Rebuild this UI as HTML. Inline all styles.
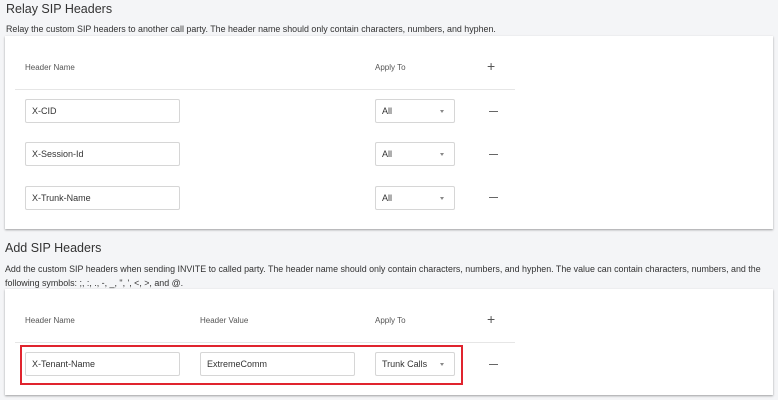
<!DOCTYPE html>
<html><head><style>
*{box-sizing:border-box;margin:0;padding:0}
body{width:778px;height:400px;background:#f4f5f7;font-family:"Liberation Sans",sans-serif;color:#333;position:relative;overflow:hidden}
.a{position:absolute}
.t{font-size:12.5px;color:#333}
.d{font-size:8.9px;color:#333;line-height:14px}
.card{background:#fff;box-shadow:0 1px 2px rgba(0,0,0,.35)}
.lbl{font-size:8px;color:#555}
.in{border:1px solid #d6d6d6;border-radius:2px;height:24px;font-size:9px;color:#333;padding:0 6px;line-height:22px;background:#fff}
.car{position:absolute;right:10px;top:10px;border-left:2.5px solid transparent;border-right:2.5px solid transparent;border-top:3px solid #888}
.minus{width:9px;height:1px;background:#666}
.line{height:1px;background:#e6e6e6}
</style></head><body>
<div class="a t" style="left:6px;top:2px">Relay SIP Headers</div>
<div class="a d" style="left:6px;top:22px">Relay the custom SIP headers to another call party. The header name should only contain characters, numbers, and hyphen.</div>
<div class="a card" style="left:5px;top:36px;width:768px;height:193px"></div>
<div class="a lbl" style="left:25px;top:63px">Header Name</div>
<div class="a lbl" style="left:375px;top:63px">Apply To</div>
<div class="a" style="left:487px;top:58px;font-size:14px;color:#555">+</div>
<div class="a line" style="left:15px;top:89px;width:500px"></div>

<div class="a in" style="left:25px;top:99px;width:155px">X-CID</div>
<div class="a in" style="left:375px;top:99px;width:80px">All<span class="car"></span></div>
<div class="a minus" style="left:489px;top:111px"></div>
<div class="a in" style="left:25px;top:142px;width:155px">X-Session-Id</div>
<div class="a in" style="left:375px;top:142px;width:80px">All<span class="car"></span></div>
<div class="a minus" style="left:489px;top:154px"></div>
<div class="a in" style="left:25px;top:186px;width:155px">X-Trunk-Name</div>
<div class="a in" style="left:375px;top:186px;width:80px">All<span class="car"></span></div>
<div class="a minus" style="left:489px;top:197px"></div>

<div class="a t" style="left:5px;top:241px">Add SIP Headers</div>
<div class="a d" style="left:5px;top:262px;width:768px">Add the custom SIP headers when sending INVITE to called party. The header name should only contain characters, numbers, and hyphen. The value can contain characters, numbers, and the following symbols: ;, :, ., -, _, ", ', &lt;, &gt;, and @.</div>
<div class="a card" style="left:5px;top:289px;width:768px;height:106px"></div>
<div class="a lbl" style="left:25px;top:316px">Header Name</div>
<div class="a lbl" style="left:200px;top:316px">Header Value</div>
<div class="a lbl" style="left:375px;top:316px">Apply To</div>
<div class="a" style="left:487px;top:311px;font-size:14px;color:#555">+</div>
<div class="a line" style="left:15px;top:342px;width:500px"></div>
<div class="a" style="left:20px;top:345px;width:443px;height:40px;border:2px solid #e0242e"></div>
<div class="a in" style="left:25px;top:352px;width:155px">X-Tenant-Name</div>
<div class="a in" style="left:200px;top:352px;width:155px">ExtremeComm</div>
<div class="a in" style="left:375px;top:352px;width:80px;padding-left:6px">Trunk Calls<span class="car"></span></div>
<div class="a minus" style="left:489px;top:364px"></div>
</body></html>
